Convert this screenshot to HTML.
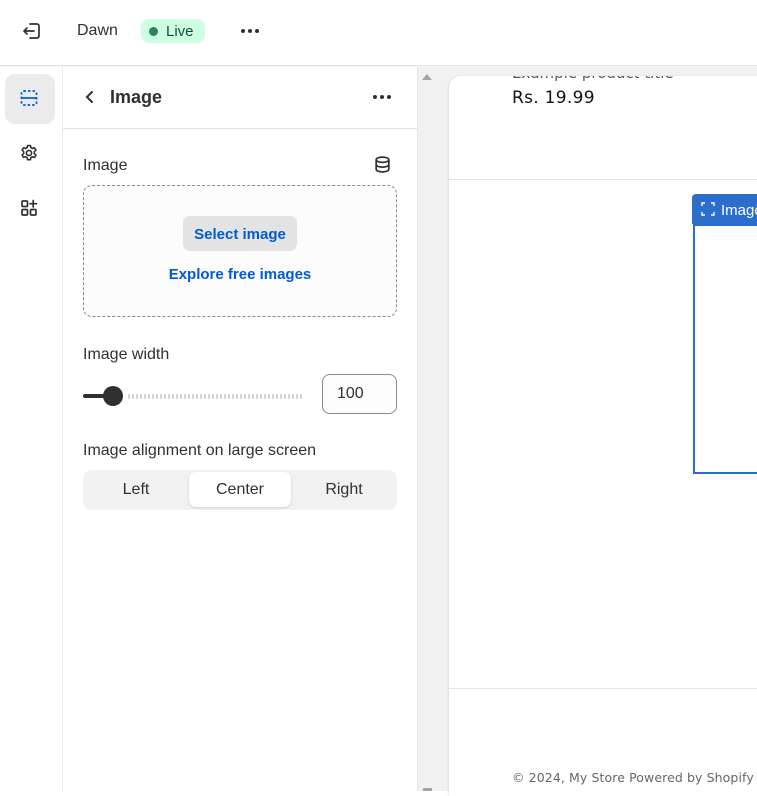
<!DOCTYPE html>
<html><head><meta charset="utf-8"><style>
*{box-sizing:border-box;margin:0;padding:0}
body{width:757px;height:791px;overflow:hidden;background:#fff;font-family:"Liberation Sans",sans-serif;color:#303030;position:relative}
.abs{position:absolute}
.top{left:0;top:0;width:757px;height:66px;background:#fff;border-bottom:1px solid #e3e3e3;box-shadow:0 1px 2px rgba(0,0,0,.06)}
.rail{left:0;top:67px;width:63px;height:724px;background:#fff;border-right:1px solid #ebebeb}
.panel{left:63px;top:67px;width:354px;height:724px;background:#fff}
.sb{left:417px;top:67px;width:18px;height:724px;background:#f1f1f1;border-left:1px solid #e6e6e6}
.gray{left:435px;top:67px;width:322px;height:724px;background:#f1f1f1}
.card{left:449px;top:76px;width:320px;height:720px;background:#fff;border-top-left-radius:12px;box-shadow:-1px 0 2px rgba(0,0,0,.08)}
.t{font-size:15px}
.dots{display:flex;gap:3px}
.dots i{display:block;width:4px;height:4px;border-radius:50%;background:#303030}
</style></head><body>
<div class="abs top"></div>
<svg class="abs" style="left:21px;top:20px" width="22" height="22" viewBox="0 0 22 22" fill="none" stroke="#303030" stroke-width="1.7" stroke-linecap="round" stroke-linejoin="round"><path d="M9 4h7a2 2 0 0 1 2 2v10a2 2 0 0 1-2 2H9"/><path d="M13 11H3M6 8l-3 3 3 3"/></svg>
<div class="abs t" style="left:77px;top:22px;font-size:16px">Dawn</div>
<div class="abs" style="left:141px;top:19px;width:64px;height:24px;border-radius:8px;background:#cdfee1"></div>
<div class="abs" style="left:149px;top:27px;width:9px;height:9px;border-radius:50%;background:#29845a"></div>
<div class="abs t" style="left:166px;top:23px;color:#0c5132">Live</div>
<div class="abs dots" style="left:241px;top:29px"><i></i><i></i><i></i></div>

<div class="abs rail"></div>
<div class="abs" style="left:5px;top:74px;width:50px;height:50px;border-radius:10px;background:#ebebeb"></div>
<svg class="abs" style="left:19px;top:88px" width="20" height="20" viewBox="0 0 20 20" fill="none" stroke="#005bd3" stroke-width="1.7"><rect x="2.5" y="3" width="15" height="14" rx="2" stroke-dasharray="2.5 2"/><path d="M2.5 10h15"/></svg>
<svg class="abs" style="left:19px;top:143px" width="20" height="20" viewBox="0 0 20 20" fill="none" stroke="#303030" stroke-width="1.6"><circle cx="10" cy="10" r="2.6"/><path d="M8.6 2.5h2.8l.5 2.1 1.6.9 2-.7 1.4 2.4-1.6 1.5v1.8l1.6 1.5-1.4 2.4-2-.7-1.6.9-.5 2.1H8.6l-.5-2.1-1.6-.9-2 .7-1.4-2.4 1.6-1.5V8.7L3.1 7.2l1.4-2.4 2 .7 1.6-.9z" stroke-linejoin="round"/></svg>
<svg class="abs" style="left:19px;top:198px" width="20" height="20" viewBox="0 0 20 20" fill="none" stroke="#303030" stroke-width="1.7"><rect x="3" y="3" width="5.5" height="5.5" rx="1"/><rect x="3" y="11.5" width="5.5" height="5.5" rx="1"/><rect x="11.5" y="11.5" width="5.5" height="5.5" rx="1"/><path d="M14.2 2.5v6.5M11 5.7h6.5" stroke-linecap="round"/></svg>

<div class="abs panel"></div>
<svg class="abs" style="left:82px;top:89px" width="16" height="16" viewBox="0 0 16 16" fill="none" stroke="#303030" stroke-width="2" stroke-linecap="round"><path d="M10 3L5 8l5 5"/></svg>
<div class="abs" style="left:110px;top:87px;font-size:18px;font-weight:bold">Image</div>
<div class="abs dots" style="left:373px;top:95px"><i></i><i></i><i></i></div>
<div class="abs" style="left:63px;top:128px;width:354px;height:1px;background:#e3e3e3"></div>
<div class="abs t" style="left:83px;top:157px;font-size:16px">Image</div>
<svg class="abs" style="left:373px;top:155px" width="19" height="19" viewBox="0 0 18 18" fill="none" stroke="#303030" stroke-width="1.6"><ellipse cx="9" cy="4.5" rx="6" ry="2.5"/><path d="M3 4.5v9c0 1.4 2.7 2.5 6 2.5s6-1.1 6-2.5v-9M3 9c0 1.4 2.7 2.5 6 2.5S15 10.4 15 9"/></svg>
<div class="abs" style="left:83px;top:185px;width:314px;height:132px;border:1px dashed #8a8a8a;border-radius:9px;background:#fcfcfc"></div>
<div class="abs" style="left:183px;top:216px;width:114px;height:35px;border-radius:7px;background:#e3e3e3"></div>
<div class="abs" style="left:183px;top:226px;width:114px;text-align:center;font-size:15px;font-weight:bold;color:#005bd3">Select image</div>
<div class="abs" style="left:83px;top:266px;width:314px;text-align:center;font-size:15px;font-weight:bold;color:#005bd3">Explore free images</div>

<div class="abs t" style="left:83px;top:346px;font-size:16px">Image width</div>
<div class="abs" style="left:128px;top:394px;width:174px;height:5px;background:repeating-linear-gradient(90deg,#d6d6d6 0 2px,transparent 2px 4px)"></div>
<div class="abs" style="left:83px;top:394px;width:30px;height:4px;border-radius:2px;background:#303030"></div>
<div class="abs" style="left:103px;top:386px;width:20px;height:20px;border-radius:50%;background:#303030"></div>
<div class="abs" style="left:322px;top:374px;width:75px;height:40px;border:1px solid #8a8a8a;border-radius:8px;background:#fdfdfd"></div>
<div class="abs t" style="left:337px;top:385px;font-size:16px">100</div>

<div class="abs t" style="left:83px;top:442px;font-size:16px">Image alignment on large screen</div>
<div class="abs" style="left:83px;top:470px;width:314px;height:40px;border-radius:9px;background:#f1f1f1"></div>
<div class="abs" style="left:189px;top:472px;width:102px;height:35px;border-radius:7px;background:#fff;box-shadow:0 1px 2px rgba(0,0,0,.15)"></div>
<div class="abs t" style="left:83px;top:481px;width:106px;text-align:center;font-size:16px">Left</div>
<div class="abs t" style="left:189px;top:481px;width:102px;text-align:center;font-size:16px">Center</div>
<div class="abs t" style="left:291px;top:481px;width:106px;text-align:center;font-size:16px">Right</div>

<div class="abs sb"></div>
<div class="abs" style="left:422px;top:74px;width:0;height:0;border-left:5px solid transparent;border-right:5px solid transparent;border-bottom:6px solid #a3a3a3"></div>
<div class="abs" style="left:423px;top:788px;width:9px;height:3px;background:#a3a3a3"></div>
<div class="abs gray"></div>
<div class="abs card"></div>
<div class="abs" style="left:449px;top:76px;width:308px;height:5px;overflow:hidden"><div style="margin-left:63px;margin-top:-12px;font-size:15px;color:#555;font-family:'DejaVu Sans',sans-serif">Example product title</div></div>
<div class="abs" style="left:512px;top:88px;font-size:17px;color:#121212;font-family:'DejaVu Sans',sans-serif;letter-spacing:.3px">Rs. 19.99</div>
<div class="abs" style="left:449px;top:179px;width:308px;height:1px;background:#e6e6e6"></div>
<div class="abs" style="left:692px;top:194px;width:70px;height:30px;border-radius:4px 4px 0 0;background:#2c6ecb"></div>
<svg class="abs" style="left:701px;top:202px" width="14" height="14" viewBox="0 0 14 14" fill="none" stroke="#fff" stroke-width="1.4"><path d="M1 4V1h3M10 1h3v3M13 10v3h-3M4 13H1v-3"/></svg>
<div class="abs" style="left:721px;top:202px;font-size:15px;color:#fff">Image</div>
<div class="abs" style="left:693px;top:224px;width:70px;height:250px;border:2px solid #2c6ecb;border-right:none"></div>
<div class="abs" style="left:449px;top:688px;width:308px;height:1px;background:#e6e6e6"></div>
<div class="abs" style="left:512px;top:770px;font-size:12.5px;color:#666;font-family:'DejaVu Sans',sans-serif;letter-spacing:.1px;white-space:nowrap">© 2024, My Store Powered by Shopify</div>
</body></html>
